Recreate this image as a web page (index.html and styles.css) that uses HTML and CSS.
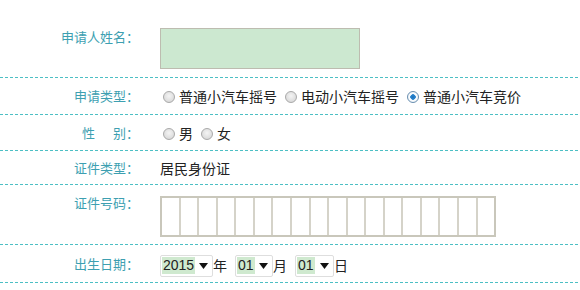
FILE: index.html
```html
<!DOCTYPE html>
<html>
	<head>
		<meta charset="utf-8"/>
		<title>申请表</title>
		<link rel="stylesheet" href="styles.css">
	</head>
	<body>
		<form class="apply">
			<div class="row row-name">
				<label class="lbl">申请人姓名：</label>
				<div class="val"><input type="text" class="name-box"/></div>
			</div>
			<div class="row row-type">
				<label class="lbl">申请类型：</label>
				<div class="val">
					<label class="opt"><input type="radio" name="kind"/>普通小汽车摇号</label>
					<label class="opt"><input type="radio" name="kind"/>电动小汽车摇号</label>
					<label class="opt"><input type="radio" name="kind" checked/>普通小汽车竞价</label>
				</div>
			</div>
			<div class="row row-sex">
				<label class="lbl">性&nbsp;&nbsp;&nbsp;&nbsp;&nbsp;别：</label>
				<div class="val">
					<label class="opt"><input type="radio" name="sex"/>男</label>
					<label class="opt"><input type="radio" name="sex"/>女</label>
				</div>
			</div>
			<div class="row row-card">
				<label class="lbl">证件类型：</label>
				<div class="val">居民身份证</div>
			</div>
			<div class="row row-id">
				<label class="lbl">证件号码：</label>
				<div class="val">
					<ul class="id-cells">
						<li></li><li></li><li></li><li></li><li></li><li></li>
						<li></li><li></li><li></li><li></li><li></li><li></li>
						<li></li><li></li><li></li><li></li><li></li><li></li>
					</ul>
				</div>
			</div>
			<div class="row row-birth">
				<label class="lbl">出生日期：</label>
				<div class="val">
					<span class="sel sel-year"><b>2015</b><svg width="9" height="6" viewBox="0 0 9 6"><path d="M0 0h9L4.5 6z" fill="#111"/></svg></span><span class="unit">年</span>
					<span class="sel sel-month"><b>01</b><svg width="9" height="6" viewBox="0 0 9 6"><path d="M0 0h9L4.5 6z" fill="#111"/></svg></span><span class="unit">月</span>
					<span class="sel sel-day"><b>01</b><svg width="9" height="6" viewBox="0 0 9 6"><path d="M0 0h9L4.5 6z" fill="#111"/></svg></span><span class="unit">日</span>
				</div>
			</div>
		</form>
	</body>
</html>
```

FILE: styles.css
```css
*{margin:0;padding:0;box-sizing:border-box;list-style-type:none;}
body
{
	background:#fff;
	font-family:"Liberation Sans","Noto Sans CJK SC",sans-serif;
	color:#222;
}
.row
{
	width:100%;
	display:flex;
	align-items:center;
	border-bottom:1px solid transparent;
	background:repeating-linear-gradient(to right,#4dbfc4 0 3px,transparent 3px 5px) left bottom/100% 1px no-repeat;
}
.lbl
{
	width:139px;
	text-align:right;
	font-size:13px;
	line-height:20px;
	color:#3d9fb1;
	flex-shrink:0;
}
.val
{
	margin-left:21px;
	display:flex;
	align-items:center;
	font-size:14px;
	line-height:20px;
}
.row-name
{
	align-items:flex-start;
	padding:28px 0 9px;
}
.name-box
{
	width:200px;
	height:41px;
	background:#cce8d0;
	border:1px solid #bdbcb0;
	outline:none;
}
.row-type{height:37px;}
.row-sex{height:36px;}
.row-card{height:34px;}
.row-birth{height:38px;}
.opt
{
	display:flex;
	align-items:center;
	margin-right:5px;
}
.opt input
{
	appearance:none;
	-webkit-appearance:none;
	width:12px;
	height:12px;
	border-radius:50%;
	border:1px solid #a9a9a9;
	background:radial-gradient(circle at 50% 40%,#f4f4f4 0,#dcdcdc 70%,#c8c8c8 100%);
	margin:0 4px 0 3px;
}
.opt input:checked
{
	border-color:#6a8fb0;
	background:radial-gradient(circle,#1b6fb8 0,#2b86d0 2.5px,#ffffff 3px,#dde9f3 100%);
}
.row-id
{
	align-items:flex-start;
	padding:10px 0 8px;
}
.row-id .lbl{margin-top:-2px;}
.id-cells
{
	display:flex;
	width:336px;
	height:41px;
	border:2px solid #c9c7bb;
}
.id-cells li
{
	flex:1;
	border-right:2px solid #d5d3c9;
}
.id-cells li:last-child{border:none;}
.sel
{
	display:flex;
	align-items:center;
	height:22px;
	border:1px solid #dedede;
	border-radius:2px;
	padding:0 4px 0 1px;
	margin-top:2px;
}
.sel b
{
	font-weight:normal;
	background:#cfe9cf;
	padding:0 1px;
	line-height:17px;
	font-size:14px;
}
.sel svg{margin-left:auto;}
.sel-year{width:53px;}
.sel-month{width:38px;margin-left:8px;}
.sel-day{width:39px;margin-left:8px;}
.unit{margin-top:2px;}
```
